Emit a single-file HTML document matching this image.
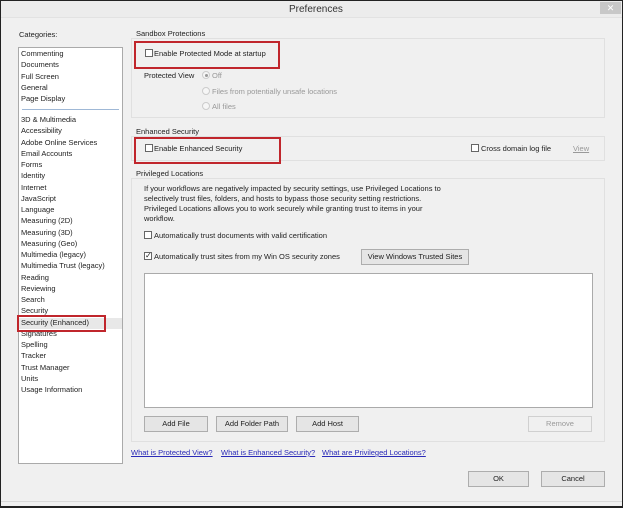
<!DOCTYPE html>
<html><head><meta charset="utf-8"><style>
*{margin:0;padding:0;box-sizing:border-box}
body{width:623px;height:508px;overflow:hidden;background:#f0f0f0;font-family:"Liberation Sans",sans-serif;font-size:7.5px;color:#222;position:relative}
.a{position:absolute;white-space:nowrap}
.frame{position:absolute;left:0;top:0;width:623px;height:508px;border:1px solid #222;border-bottom:2px solid #222}
.title{position:absolute;left:1px;top:1px;width:621px;height:17px;background:#ececec;border-bottom:1px solid #e2e2e2}
.grp{position:absolute;border:1px solid #e0e0e0;background:#f0f0f0}
.red{position:absolute;border:2px solid #c0262c}
.cb{position:absolute;width:8px;height:8px;border:1px solid #666;background:#fff}
.rd{position:absolute;width:8px;height:8px;border:1px solid #ccc;border-radius:50%;background:#f6f6f6}
.btn{position:absolute;height:16px;border:1px solid #adadad;background:#e5e5e5;text-align:center;line-height:14px;font-size:7.5px}
.lnk{position:absolute;color:#2a2ab8;text-decoration:underline;white-space:nowrap}
.list div{height:11.25px;line-height:11.25px}
</style></head><body>
<div class="title"></div>
<div class="a" style="left:289px;top:4px;font-size:10px;color:#333">Preferences</div>
<div class="a" style="left:600px;top:2px;width:21px;height:12px;background:#c8c8c8;color:#fff;text-align:center;font-size:9px;line-height:12px">✕</div>
<div class="a" style="left:19px;top:30px">Categories:</div>
<div class="a" style="left:18px;top:47px;width:105px;height:417px;background:#fff;border:1px solid #aaa"></div>
<div class="a" style="left:18px;top:318px;width:104px;height:11px;background:#e8e8e8"></div>
<div class="a" style="left:22px;top:109px;width:97px;height:1px;background:#9fb8d6"></div>
<div class="a list" style="left:21px;top:48px">
<div>Commenting</div><div>Documents</div><div>Full Screen</div><div>General</div><div>Page Display</div></div>
<div class="a list" style="left:21px;top:114px">
<div>3D &amp; Multimedia</div><div>Accessibility</div><div>Adobe Online Services</div><div>Email Accounts</div><div>Forms</div><div>Identity</div><div>Internet</div><div>JavaScript</div><div>Language</div><div>Measuring (2D)</div><div>Measuring (3D)</div><div>Measuring (Geo)</div><div>Multimedia (legacy)</div><div>Multimedia Trust (legacy)</div><div>Reading</div><div>Reviewing</div><div>Search</div><div>Security</div><div>Security (Enhanced)</div><div>Signatures</div><div>Spelling</div><div>Tracker</div><div>Trust Manager</div><div>Units</div><div>Usage Information</div></div>
<div class="red" style="left:17px;top:315px;width:89px;height:17px"></div>

<div class="grp" style="left:131px;top:38px;width:474px;height:80px"></div>
<div class="a" style="left:136px;top:29px;background:#f0f0f0;padding-right:2px">Sandbox Protections</div>
<div class="cb" style="left:145px;top:49px"></div>
<div class="a" style="left:154px;top:49px">Enable Protected Mode at startup</div>
<div class="red" style="left:134px;top:41px;width:146px;height:28px"></div>
<div class="a" style="left:144px;top:71px">Protected View</div>
<div class="rd" style="left:202px;top:71px"><div style="position:absolute;left:2px;top:2px;width:3px;height:3px;border-radius:50%;background:#999"></div></div>
<div class="a" style="left:212px;top:71px;color:#999">Off</div>
<div class="rd" style="left:202px;top:87px"></div>
<div class="a" style="left:212px;top:87px;color:#999">Files from potentially unsafe locations</div>
<div class="rd" style="left:202px;top:102px"></div>
<div class="a" style="left:212px;top:102px;color:#999">All files</div>

<div class="grp" style="left:131px;top:136px;width:474px;height:25px"></div>
<div class="a" style="left:136px;top:127px;background:#f0f0f0;padding-right:2px">Enhanced Security</div>
<div class="cb" style="left:145px;top:144px"></div>
<div class="a" style="left:154px;top:144px">Enable Enhanced Security</div>
<div class="red" style="left:134px;top:137px;width:147px;height:27px"></div>
<div class="cb" style="left:471px;top:144px"></div>
<div class="a" style="left:481px;top:144px">Cross domain log file</div>
<div class="a" style="left:573px;top:144px;color:#999;text-decoration:underline">View</div>

<div class="grp" style="left:131px;top:178px;width:474px;height:264px"></div>
<div class="a" style="left:136px;top:169px;background:#f0f0f0;padding-right:2px">Privileged Locations</div>
<div class="a" style="left:144px;top:184px;line-height:10px">If your workflows are negatively impacted by security settings, use Privileged Locations to<br>selectively trust files, folders, and hosts to bypass those security setting restrictions.<br>Privileged Locations allows you to work securely while granting trust to items in your<br>workflow.</div>
<div class="cb" style="left:144px;top:231px"></div>
<div class="a" style="left:154px;top:231px">Automatically trust documents with valid certification</div>
<div class="cb" style="left:144px;top:252px;font-size:8px;line-height:6px;text-align:center">✓</div>
<div class="a" style="left:154px;top:252px">Automatically trust sites from my Win OS security zones</div>
<div class="btn" style="left:361px;top:249px;width:108px">View Windows Trusted Sites</div>
<div class="a" style="left:144px;top:273px;width:449px;height:135px;background:#fff;border:1px solid #aaa"></div>
<div class="btn" style="left:144px;top:416px;width:64px">Add File</div>
<div class="btn" style="left:216px;top:416px;width:72px">Add Folder Path</div>
<div class="btn" style="left:296px;top:416px;width:63px">Add Host</div>
<div class="btn" style="left:528px;top:416px;width:64px;color:#999;border-color:#d0d0d0;background:#f0f0f0">Remove</div>
<div class="lnk" style="left:131px;top:448px">What is Protected View?</div>
<div class="lnk" style="left:221px;top:448px">What is Enhanced Security?</div>
<div class="lnk" style="left:322px;top:448px">What are Privileged Locations?</div>
<div class="btn" style="left:468px;top:471px;width:61px">OK</div>
<div class="btn" style="left:541px;top:471px;width:64px">Cancel</div>
<div class="a" style="left:1px;top:501px;width:621px;height:1px;background:#d8d8d8"></div>
<div class="frame"></div>
</body></html>
